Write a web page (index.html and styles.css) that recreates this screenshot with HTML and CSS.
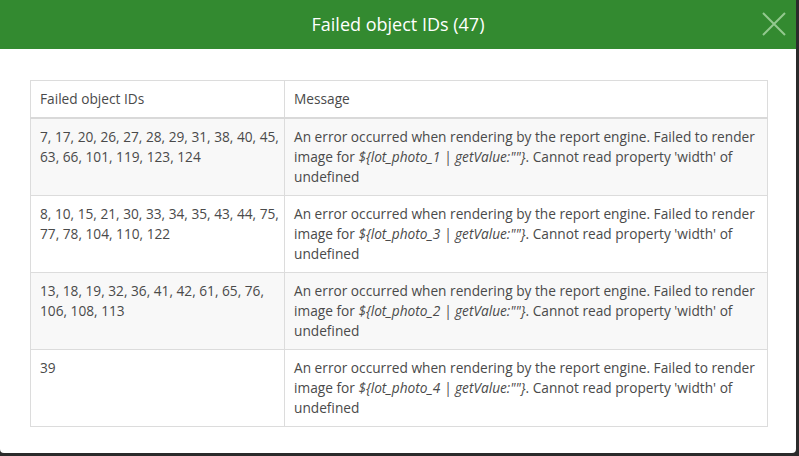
FILE: index.html
```html
<!DOCTYPE html>
<html>
<head>
<meta charset="utf-8">
<link rel="stylesheet" href="styles.css">
</head>
<body>
<div class="dialog">
  <div class="header">
    <div class="title">Failed object IDs (47)</div>
    <button class="close" aria-label="Close">
      <svg width="24" height="24" viewBox="0 0 24 24"><path d="M1 1 L23 23 M23 1 L1 23" stroke="#93c98f" stroke-width="2" fill="none"/></svg>
    </button>
  </div>
  <div class="body">
    <table class="grid">
      <thead>
        <tr><th class="c1">Failed object IDs</th><th>Message</th></tr>
      </thead>
      <tbody>
        <tr class="odd"><td>7, 17, 20, 26, 27, 28, 29, 31, 38, 40, 45, 63, 66, 101, 119, 123, 124</td><td>An error occurred when rendering by the report engine. Failed to render image for <i>${lot_photo_1 | getValue:""}</i>. Cannot read property 'width' of undefined</td></tr>
        <tr><td>8, 10, 15, 21, 30, 33, 34, 35, 43, 44, 75, 77, 78, 104, 110, 122</td><td>An error occurred when rendering by the report engine. Failed to render image for <i>${lot_photo_3 | getValue:""}</i>. Cannot read property 'width' of undefined</td></tr>
        <tr class="odd"><td>13, 18, 19, 32, 36, 41, 42, 61, 65, 76, 106, 108, 113</td><td>An error occurred when rendering by the report engine. Failed to render image for <i>${lot_photo_2 | getValue:""}</i>. Cannot read property 'width' of undefined</td></tr>
        <tr><td>39</td><td>An error occurred when rendering by the report engine. Failed to render image for <i>${lot_photo_4 | getValue:""}</i>. Cannot read property 'width' of undefined</td></tr>
      </tbody>
    </table>
  </div>
</div>
</body>
</html>
```

FILE: styles.css
```css
html, body {
  margin: 0;
  padding: 0;
  background: #2b2b2b;
  width: 799px;
  height: 456px;
  overflow: hidden;
}
.dialog {
  width: 796px;
  height: 453px;
  background: #ffffff;
  border-radius: 0 0 4px 4px;
  display: flex;
  flex-direction: column;
  font-family: "Open Sans", "Noto Sans", sans-serif;
  color: #4a4a4a;
}
.header {
  height: 49px;
  background: #338a30;
  display: flex;
  align-items: center;
  justify-content: center;
  position: relative;
}
.title {
  color: #ffffff;
  font-size: 18px;
  margin-top: -2px;
}
.close {
  position: absolute;
  right: 10px;
  top: 12px;
  width: 24px;
  height: 24px;
  padding: 0;
  border: 0;
  background: transparent;
  display: flex;
}
.body {
  padding: 31px 28px 0 30px;
}
.grid {
  width: 738px;
  border-collapse: collapse;
  font-size: 13.7px;
  line-height: 20px;
  color: #4a4a4a;
}
.grid th, .grid td {
  border: 1px solid #dcdcdc;
  padding: 8px 4px 8px 9px;
  text-align: left;
  vertical-align: top;
  font-weight: normal;
}
.grid th {
  border-bottom: 2px solid #d9d9d9;
}
.grid .c1 {
  width: 240px;
}
.grid tr.odd td {
  background: #f8f8f8;
}
.grid i {
  font-style: italic;
}
```
